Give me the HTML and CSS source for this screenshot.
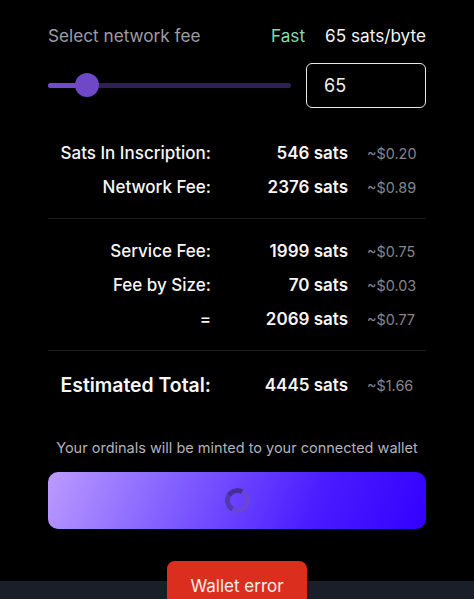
FILE: index.html
```html
<!DOCTYPE html>
<html lang="en">
<head>
    <meta charset="UTF-8">
    <meta name="viewport" content="width=device-width, initial-scale=1.0">
    <title>Network Fee</title>
    <link rel="stylesheet" href="styles.css">
</head>
<body>
    <main class="panel">
        <div class="fee-header">
            <span class="fee-title">Select network fee</span>
            <span class="fee-speed">Fast</span>
            <span class="fee-rate">65 sats/byte</span>
        </div>

        <div class="fee-controls">
            <div class="slider">
                <div class="slider-fill"></div>
                <div class="slider-thumb"></div>
            </div>
            <div class="fee-input">65</div>
        </div>

        <section class="rows first">
            <div class="row"><span class="label">Sats In Inscription:</span><span class="sats">546 sats</span><span class="usd">~$0.20</span></div>
            <div class="row"><span class="label">Network Fee:</span><span class="sats">2376 sats</span><span class="usd">~$0.89</span></div>
        </section>

        <section class="rows">
            <div class="row"><span class="label">Service Fee:</span><span class="sats">1999 sats</span><span class="usd">~$0.75</span></div>
            <div class="row"><span class="label">Fee by Size:</span><span class="sats">70 sats</span><span class="usd">~$0.03</span></div>
            <div class="row"><span class="label">=</span><span class="sats">2069 sats</span><span class="usd">~$0.77</span></div>
        </section>

        <section class="rows total">
            <div class="row"><span class="label">Estimated Total:</span><span class="sats">4445 sats</span><span class="usd">~$1.66</span></div>
        </section>

        <p class="note">Your ordinals will be minted to your connected wallet</p>

        <button class="mint"><span class="spinner"></span></button>
    </main>

    <footer class="bottom-bar"></footer>
    <div class="toast">Wallet error</div>
</body>
</html>
```

FILE: styles.css
```css
* {
    margin: 0;
    padding: 0;
    box-sizing: border-box;
    font-family: 'Inter', 'Liberation Sans', sans-serif;
}

html, body {
    height: 599px;
    overflow: hidden;
}

body {
    background: #000;
    color: #fff;
    position: relative;
    display: flex;
    flex-direction: column;
}

.panel {
    flex: 1;
    padding: 24px 48px 0;
}

.fee-header {
    display: flex;
    align-items: center;
    height: 22px;
    font-size: 17.2px;
}

.fee-title {
    color: #9d9da6;
    flex: 1;
}

.fee-speed {
    color: #84d9a8;
    margin-right: 20px;
}

.fee-rate {
    color: #f4f4f4;
}

.fee-controls {
    display: flex;
    align-items: center;
    justify-content: space-between;
    margin-top: 17px;
}

.slider {
    width: 243px;
    height: 5px;
    border-radius: 3px;
    background: #2e2052;
    position: relative;
}

.slider-fill {
    width: 38px;
    height: 100%;
    border-radius: 3px;
    background: #6f4cc9;
}

.slider-thumb {
    position: absolute;
    left: 27px;
    top: -10px;
    width: 24px;
    height: 24px;
    border-radius: 50%;
    background: #6f48c8;
}

.fee-input {
    width: 120px;
    height: 45px;
    border: 1.5px solid #e8e8e8;
    border-radius: 6px;
    padding-left: 17px;
    display: flex;
    align-items: center;
    font-size: 18px;
    color: #f0f0f0;
}

.rows {
    padding: 15px 0 14px;
    border-bottom: 1px solid #1a1a1d;
    display: flex;
    flex-direction: column;
}

.rows.first {
    padding-top: 28px;
}

.rows.total {
    border-bottom: none;
    padding: 17px 0 0;
}

.row {
    display: grid;
    grid-template-columns: 163px 137px 1fr;
    align-items: center;
    height: 34px;
}

.label {
    text-align: right;
    font-size: 17px;
    font-weight: 500;
    color: #f6f6f6;
}

.sats {
    text-align: right;
    font-size: 17px;
    font-weight: 600;
    color: #f6f6f6;
}

.usd {
    padding-left: 19px;
    font-size: 14.4px;
    color: #85858c;
}

.total .label {
    font-size: 19.4px;
    font-weight: 600;
}

.note {
    margin-top: 36px;
    text-align: center;
    font-size: 14.5px;
    line-height: 20px;
    color: #b4b4b8;
    white-space: nowrap;
}

.mint {
    display: flex;
    align-items: center;
    justify-content: center;
    width: 100%;
    height: 57px;
    margin-top: 14px;
    border: none;
    border-radius: 10px;
    background: linear-gradient(112deg, #bb9bff 0%, #7f5cff 35%, #4a1cff 70%, #3300ff 100%);
}

.spinner {
    width: 25px;
    height: 25px;
    border-radius: 50%;
    border: 5px solid #6a45d8;
    border-top-color: #45309a;
    border-left-color: #5338b0;
    transform: rotate(-15deg);
}

.bottom-bar {
    height: 18px;
    background: #1a1e28;
}

.toast {
    position: absolute;
    left: 167px;
    top: 561px;
    width: 140px;
    height: 50px;
    padding-top: 15px;
    border-radius: 8px;
    background: #dc2e1e;
    color: #f4f0ee;
    font-size: 17px;
    line-height: 20px;
    text-align: center;
}
```
